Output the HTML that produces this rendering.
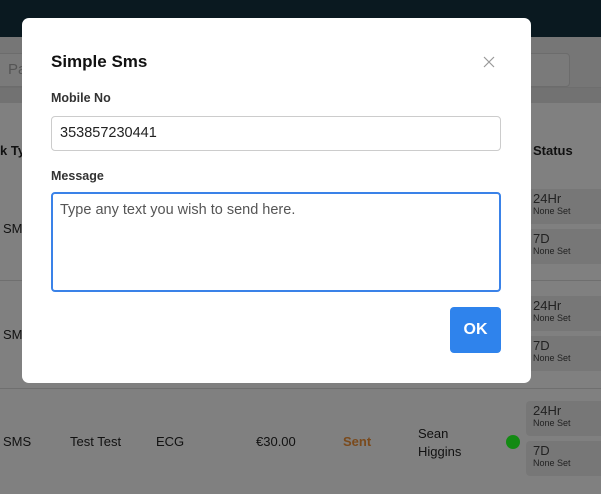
<!DOCTYPE html>
<html><head><style>
*{margin:0;padding:0;box-sizing:border-box}
body{width:601px;height:494px;overflow:hidden;background:#808080;font-family:"Liberation Sans","DejaVu Sans",sans-serif;position:relative;color:#000}
.a{position:absolute}
.hdr{left:0;top:0;width:601px;height:37px;background:#0a1920}
.sbar{left:0;top:37px;width:601px;height:50px;background:#767676}
.band{left:0;top:87px;width:601px;height:16px;background:#727272;border-top:1px solid #6e6e6e}
.inp{left:-10px;top:53px;width:580px;height:34px;border:1px solid #6c6c6c;border-radius:4px;background:#7a7a7a}
.line{left:0;width:601px;height:1px;background:#6f6f6f}
.b{left:526px;width:80px;height:35px;background:#777;border-radius:4px;padding:3px 0 0 7px;color:#222;font-size:13px;line-height:14px}
.b small{display:block;font-size:9px;line-height:11px}
.t{font-size:13px;color:#111}
.modal{left:22px;top:18px;width:509px;height:365px;background:#fff;border-radius:7px}
.lbl{font-size:12.5px;font-weight:bold;color:#333}
</style></head><body>
<div class="a hdr"></div>
<div class="a sbar"></div>
<div class="a inp"></div>
<div class="a t" style="left:8px;top:61px;font-size:15px;color:#555">Pa</div>
<div class="a band"></div>
<div class="a t" style="left:0;top:143px;font-weight:bold">k Typ</div>
<div class="a t" style="left:533px;top:143px;font-weight:bold">Status</div>
<div class="a t" style="left:3px;top:221px">SMS</div>
<div class="a t" style="left:3px;top:327px">SMS</div>
<div class="a line" style="top:280px"></div>
<div class="a line" style="top:388px"></div>
<div class="a b" style="top:189px">24Hr<small>None Set</small></div>
<div class="a b" style="top:229px">7D<small>None Set</small></div>
<div class="a b" style="top:296px">24Hr<small>None Set</small></div>
<div class="a b" style="top:336px">7D<small>None Set</small></div>
<div class="a b" style="top:401px">24Hr<small>None Set</small></div>
<div class="a b" style="top:441px">7D<small>None Set</small></div>
<div class="a t" style="left:3px;top:434px">SMS</div>
<div class="a t" style="left:70px;top:434px">Test Test</div>
<div class="a t" style="left:156px;top:434px">ECG</div>
<div class="a t" style="left:256px;top:434px">€30.00</div>
<div class="a t" style="left:343px;top:434px;color:#7a4a1c;font-weight:bold">Sent</div>
<div class="a t" style="left:418px;top:425px;line-height:18px">Sean<br>Higgins</div>
<div class="a" style="left:506px;top:435px;width:14px;height:14px;border-radius:50%;background:#138a13"></div>

<div class="a modal">
 <div class="a" style="left:29px;top:34px;font-size:17px;font-weight:bold;color:#111">Simple Sms</div>
 <svg class="a" style="left:461px;top:38px" width="12" height="12" viewBox="0 0 12 12"><path d="M1 1L11 11M11 1L1 11" stroke="#999" stroke-width="1.2"/></svg>
 <div class="a lbl" style="left:29px;top:73px">Mobile No</div>
 <div class="a" style="left:29px;top:98px;width:450px;height:35px;border:1px solid #ccc;border-radius:4px;font-size:14.5px;padding:8px 0 0 8px;color:#222">353857230441</div>
 <div class="a lbl" style="left:29px;top:151px">Message</div>
 <div class="a" style="left:29px;top:174px;width:450px;height:100px;border:2px solid #3a82e8;border-radius:4px;font-size:14.5px;padding:8px 0 0 7px;color:#555">Type any text you wish to send here.</div>
 <div class="a" style="left:428px;top:289px;width:51px;height:46px;background:#2f83ec;border-radius:4px;color:#fff;font-weight:bold;font-size:16px;text-align:center;line-height:46px">OK</div>
</div>
</body></html>
